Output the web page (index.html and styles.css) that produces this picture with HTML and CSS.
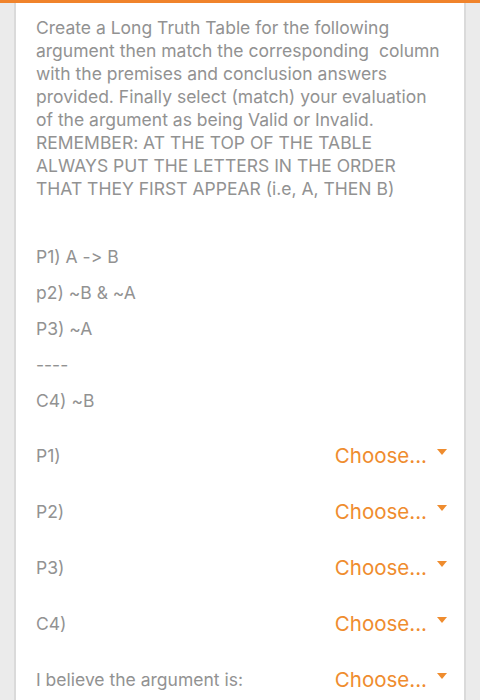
FILE: index.html
```html
<!DOCTYPE html>
<html lang="en">
<head>
    <meta charset="UTF-8">
    <meta name="viewport" content="width=device-width, initial-scale=1.0">
    <title>Truth Table Question</title>
    <link rel="stylesheet" href="styles.css">
</head>
<body>
    <div class="topbar"></div>
    <div class="card">
        <p class="intro">
            Create a Long Truth Table for the following argument then match the corresponding&nbsp; column with the premises and conclusion answers provided. Finally select (match) your evaluation of the argument as being Valid or Invalid.<br>
            REMEMBER: AT THE TOP OF THE TABLE ALWAYS PUT THE LETTERS IN THE ORDER THAT THEY FIRST APPEAR (i.e, A, THEN B)
        </p>

        <div class="premises">
            <p>P1) A -&gt; B</p>
            <p>p2) ~B &amp; ~A</p>
            <p>P3) ~A</p>
            <p>----</p>
            <p>C4) ~B</p>
        </div>

        <div class="answers">
            <div class="row">
                <span class="label">P1)</span>
                <span class="choose">Choose...<span class="caret"></span></span>
            </div>
            <div class="row">
                <span class="label">P2)</span>
                <span class="choose">Choose...<span class="caret"></span></span>
            </div>
            <div class="row">
                <span class="label">P3)</span>
                <span class="choose">Choose...<span class="caret"></span></span>
            </div>
            <div class="row">
                <span class="label">C4)</span>
                <span class="choose">Choose...<span class="caret"></span></span>
            </div>
            <div class="row">
                <span class="label">I believe the argument is:</span>
                <span class="choose">Choose...<span class="caret"></span></span>
            </div>
        </div>
    </div>
</body>
</html>
```

FILE: styles.css
```css
body {
    margin: 0;
    font-family: 'Inter', 'Liberation Sans', sans-serif;
    font-feature-settings: "calt" 0, "liga" 0;
    background-color: #ebebeb;
    color: #929292;
    font-size: 17.5px;
    line-height: 23px;
}
.topbar {
    height: 3px;
    background-color: #f0832b;
}
.card {
    margin-left: 14px;
    width: 452px;
    padding: 13px 17px 0 20px;
    box-sizing: border-box;
    background-color: #fff;
    border-left: 2px solid #dadada;
    border-right: 2px solid #dadada;
    min-height: 697px;
}
.intro {
    margin: 0;
    padding-right: 5px;
}
.premises {
    padding-top: 45px;
}
.premises p {
    margin: 0 0 13px 0;
}
.answers {
    padding-top: 2px;
}
.row {
    display: flex;
    justify-content: space-between;
    align-items: center;
    height: 56px;
}
.choose {
    color: #ef8c2e;
    font-size: 20.5px;
    display: flex;
    align-items: flex-start;
}
.caret {
    width: 0;
    height: 0;
    margin: 5px 0 0 10px;
    border-left: 5px solid transparent;
    border-right: 5px solid transparent;
    border-top: 6px solid #ef8c2e;
}
```
